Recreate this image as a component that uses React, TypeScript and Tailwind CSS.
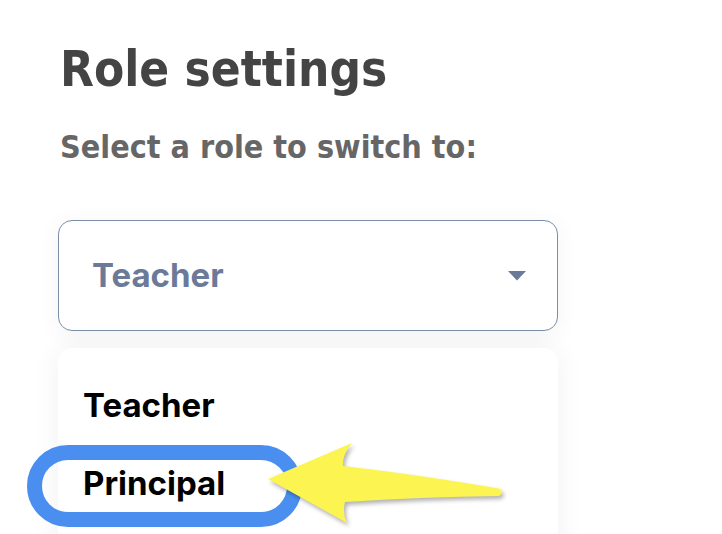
import React from "react";

const heading = { fontFamily: "'DejaVu Sans Condensed', 'DejaVu Sans', Verdana, sans-serif" };
const body = { fontFamily: "Inter, 'Open Sans', sans-serif" };

function Caret() {
  return (
    <svg width="18" height="10" viewBox="0 0 18 10" className="shrink-0">
      <path d="M0 0 H18 L9 9.5 Z" fill="#6b7a99" />
    </svg>
  );
}

function YellowArrow() {
  return (
    <svg
      width="250"
      height="100"
      viewBox="0 0 250 100"
      className="absolute left-[260px] top-[435px]"
      style={{ filter: "drop-shadow(2px 3px 2px rgba(0,0,0,0.3))" }}
    >
      <path
        d="M8 44 L92 8 Q82 20 83 31 Q160 40 239 53.5 Q245 57.5 239 61 Q160 62 85 67 Q82 78 87 88 Z"
        fill="#fcf451"
      />
    </svg>
  );
}

export default function App() {
  return (
    <div className="relative w-[722px] h-[534px] overflow-hidden bg-white" style={body}>
      <div className="flex flex-col pl-[58px] pt-[42px]">
        <h1 style={heading} className="pl-[2px] text-[49px] leading-[56px] font-bold text-[#444444]">
          Role settings
        </h1>
        <p style={heading} className="pl-[2px] mt-[30px] text-[32px] leading-[38px] font-bold text-[#666666]">
          Select a role to switch to:
        </p>

        {/* Select */}
        <div className="mt-[54px] w-[500px] h-[111px] rounded-[14px] border border-[#7a8ea5] bg-white shadow-[0_4px_24px_rgba(0,0,0,0.05)] flex items-center justify-between pl-[33px] pr-[31px]">
          <span className="text-[33px] font-bold text-[#6b7a99]">Teacher</span>
          <Caret />
        </div>

        {/* Menu */}
        <div className="mt-[17px] w-[500px] h-[220px] rounded-[14px] bg-white shadow-[0_0_30px_rgba(0,0,0,0.06)] pt-[19px] px-[25px] flex flex-col">
          <div className="h-[78px] flex items-center text-[33px] font-bold text-black">Teacher</div>
          <div className="h-[78px] flex items-center text-[33px] font-bold text-black">Principal</div>
        </div>
      </div>

      {/* annotation */}
      <div className="absolute left-[27px] top-[445px] w-[275px] h-[82px] rounded-full border-[15px] border-[#4a8ff0]" />
      <YellowArrow />
    </div>
  );
}
